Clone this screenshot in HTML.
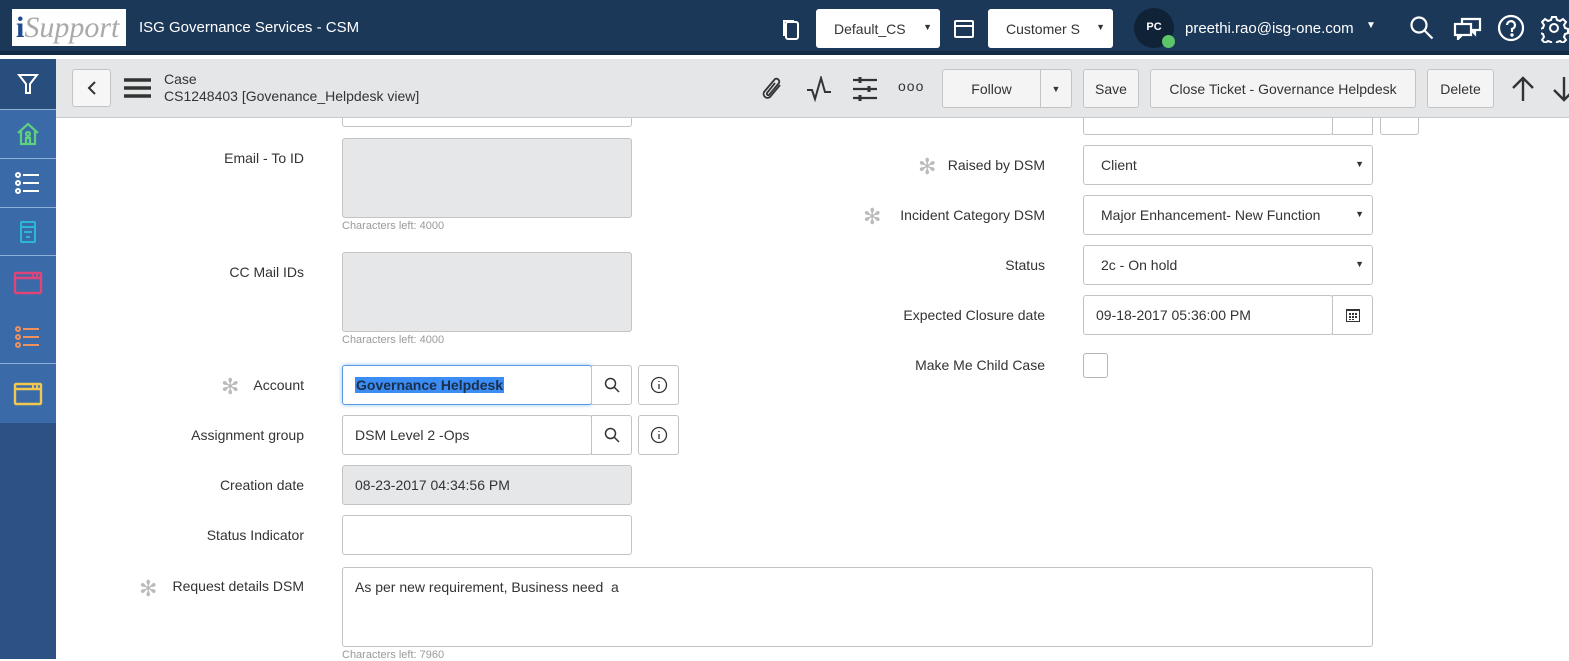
<!DOCTYPE html>
<html><head><meta charset="utf-8"><style>
*{box-sizing:border-box;margin:0;padding:0}
body{width:1569px;height:659px;overflow:hidden;background:#fff;font-family:"Liberation Sans",sans-serif;color:#333;position:relative;font-size:14px}
.a{position:absolute}
.top{left:0;top:0;width:1569px;height:55px;background:#1c3858;border-bottom:4px solid #132a44}
.side{left:0;top:59px;width:56px;height:600px;background:#2b5283}
.hb{left:56px;top:59px;width:1513px;height:59px;background:#e5e6e8;border-bottom:1px solid #c8c8c8}
.btn{position:absolute;background:#f4f4f4;border:1px solid #c4c4c4;border-radius:3px;font-size:14px;color:#333;display:flex;align-items:center;justify-content:center}
.lbl{position:absolute;font-size:14px;color:#333;text-align:right;white-space:nowrap}
.inp{position:absolute;border:1px solid #c3c3c3;border-radius:3px;background:#fff;font-size:14px;color:#333;padding-left:12px;display:flex;align-items:center}
.gray{background:#e6e7e9}
.cl{position:absolute;font-size:11px;color:#9a9a9a}
.ast{position:absolute;color:#bbb;font-size:22px;line-height:1}
.sel:after{content:"\25BC";position:absolute;right:8px;top:13px;font-size:9px;color:#333}
.sb{position:absolute;width:41px;border:1px solid #c3c3c3;background:#fff;display:flex;align-items:center;justify-content:center}
.sitem{position:absolute;left:0;width:56px;background:#3a6aa8;border-bottom:1px solid #8fb0da;display:flex;align-items:center;justify-content:center}
</style></head><body>
<div class="a top"></div>
<div class="a" style="left:12px;top:9px;width:114px;height:37px;background:#fff;font-family:'Liberation Serif',serif;font-style:italic;font-size:30px;color:#aaa;line-height:37px;padding-left:4px"><span style="color:#1d4b8f;font-style:normal;font-weight:bold">i</span>Support</div>
<div class="a" style="left:139px;top:19px;color:#fff;font-size:15px">ISG Governance Services - CSM</div>
<svg class="a" style="left:781px;top:18px" width="20" height="24" viewBox="0 0 20 24" fill="none" stroke="#fff" stroke-width="2"><rect x="5" y="4" width="12" height="17" rx="2"/><path d="M3 18V3h10"/></svg>
<div class="a inp sel" style="left:816px;top:9px;width:124px;height:39px;border:none;padding-left:18px">Default_CS</div>
<svg class="a" style="left:953px;top:19px" width="22" height="20" viewBox="0 0 22 20" fill="none" stroke="#fff" stroke-width="2"><rect x="2" y="2" width="18" height="16" rx="1"/><path d="M2 7h18"/></svg>
<div class="a inp sel" style="left:988px;top:9px;width:125px;height:39px;border:none;padding-left:18px">Customer S</div>
<div class="a" style="left:1134px;top:8px;width:40px;height:40px;border-radius:50%;background:#0f2236;color:#fff;font-size:11px;font-weight:bold;text-align:center;line-height:38px">PC</div>
<div class="a" style="left:1162px;top:35px;width:13px;height:13px;border-radius:50%;background:#5ec46a"></div>
<div class="a" style="left:1185px;top:20px;color:#fff;font-size:15px">preethi.rao@isg-one.com</div>
<div class="a" style="left:1366px;top:20px;color:#fff;font-size:10px">▼</div>
<svg class="a" style="left:1409px;top:15px" width="26" height="26" viewBox="0 0 26 26" fill="none" stroke="#fff" stroke-width="2.2"><circle cx="10" cy="10" r="7.5"/><path d="M15.5 15.5l8 8"/></svg>
<svg class="a" style="left:1453px;top:16px" width="30" height="24" viewBox="0 0 30 24" fill="none" stroke="#fff" stroke-width="2.2"><rect x="2" y="8" width="16" height="11"/><path d="M5 19v4l4-4"/><path d="M9 8V3h18v11h-9M22 14v4l-4-4"/></svg>
<svg class="a" style="left:1497px;top:14px" width="28" height="28" viewBox="0 0 28 28" fill="none" stroke="#fff" stroke-width="2.2"><circle cx="14" cy="14" r="12"/><path d="M10 11a4 4 0 1 1 5 4v3"/><circle cx="15" cy="21" r="0.6" fill="#fff"/></svg>
<svg class="a" style="left:1541px;top:15px" width="28" height="28" viewBox="0 0 28 28" fill="none" stroke="#fff" stroke-width="2"><circle cx="13" cy="13" r="4"/><path d="M11 2h4l1 3 3 1 3-2 3 3-2 3 1 3 3 1v4l-3 1-1 3 2 3-3 3-3-2-3 1-1 3h-4l-1-3-3-1-3 2-3-3 2-3-1-3-3-1v-4l3-1 1-3-2-3 3-3 3 2 3-1z"/></svg>

<div class="a side"></div>
<div class="a" style="left:0;top:59px;width:56px;height:51px;background:#284e7e;border-bottom:1px solid #8fb0da;display:flex;align-items:center;justify-content:center">
<svg width="22" height="24" viewBox="0 0 22 24" fill="none" stroke="#fff" stroke-width="2"><path d="M2 3h18l-7 9v9h-4v-9z"/></svg></div>
<div class="sitem" style="top:110px;height:49px"><svg width="26" height="26" viewBox="0 0 26 26" fill="none" stroke="#5fd07d" stroke-width="2.2"><path d="M3 12L13 3l10 9M6 10v13h14V10"/><circle cx="13" cy="13" r="2"/><path d="M11 23v-6h4v6"/></svg></div>
<div class="sitem" style="top:159px;height:49px"><svg width="26" height="22" viewBox="0 0 26 22" fill="none" stroke="#fff" stroke-width="2"><circle cx="3" cy="3" r="2"/><circle cx="3" cy="11" r="2"/><circle cx="3" cy="19" r="2"/><path d="M8 3h16M8 11h16M8 19h16"/></svg></div>
<div class="sitem" style="top:208px;height:48px"><svg width="18" height="24" viewBox="0 0 18 24" fill="none" stroke="#2bb8d6" stroke-width="2"><rect x="2" y="2" width="14" height="20" rx="1"/><path d="M2 7h14M5 12h8M7 17h4"/></svg></div>
<div class="sitem" style="top:256px;height:54px;border-bottom:none"><svg width="30" height="24" viewBox="0 0 30 24" fill="none" stroke="#e0457a" stroke-width="2.4"><rect x="2" y="2" width="26" height="20" rx="1"/><path d="M2 7h26M19 4.5h2M23 4.5h2"/></svg></div>
<div class="sitem" style="top:310px;height:54px"><svg width="26" height="22" viewBox="0 0 26 22" fill="none" stroke="#f0905a" stroke-width="2"><circle cx="3" cy="3" r="2"/><circle cx="3" cy="11" r="2"/><circle cx="3" cy="19" r="2"/><path d="M8 3h16M8 11h16M8 19h16"/></svg></div>
<div class="sitem" style="top:364px;height:59px;border-bottom:none"><svg width="30" height="24" viewBox="0 0 30 24" fill="none" stroke="#f0c850" stroke-width="2.4"><rect x="2" y="2" width="26" height="20" rx="1"/><path d="M2 7h26M19 4.5h2M23 4.5h2"/></svg></div>

<div class="a hb"></div>
<div class="btn" style="left:72px;top:69px;width:39px;height:38px;background:#f6f6f6"><svg width="10" height="16" viewBox="0 0 10 16" fill="none" stroke="#333" stroke-width="2"><path d="M8 2L2 8l6 6"/></svg></div>
<svg class="a" style="left:124px;top:78px" width="27" height="20" viewBox="0 0 27 20" stroke="#333" stroke-width="3.4"><path d="M0 2h27M0 10h27M0 18h27"/></svg>
<div class="a" style="left:164px;top:71px;font-size:14px;color:#333">Case</div>
<div class="a" style="left:164px;top:88px;font-size:14px;color:#333">CS1248403 [Govenance_Helpdesk view]</div>
<svg class="a" style="left:760px;top:75px" width="26" height="28" viewBox="0 0 26 28" fill="none" stroke="#333" stroke-width="1.8"><path d="M20 10L10 22a4 4 0 0 1-6-5L15 4a3 3 0 0 1 4 4L9 20a1.5 1.5 0 0 1-2-2l8-10"/></svg>
<svg class="a" style="left:806px;top:76px" width="26" height="26" viewBox="0 0 26 26" fill="none" stroke="#333" stroke-width="2"><path d="M1 14h5l3 9 6-21 4 14h6"/></svg>
<svg class="a" style="left:852px;top:76px" width="26" height="26" viewBox="0 0 26 26" fill="none" stroke="#333" stroke-width="2.2"><path d="M1 4h24M1 13h24M1 22h24"/><path d="M8 1v6M17 10v6M8 19v6" stroke-width="3"/></svg>
<div class="a" style="left:898px;top:78px;font-size:14px;color:#333;letter-spacing:1px">ooo</div>
<div class="btn" style="left:942px;top:69px;width:99px;height:39px;border-radius:3px 0 0 3px">Follow</div>
<div class="btn" style="left:1040px;top:69px;width:32px;height:39px;border-radius:0 3px 3px 0;font-size:9px">▼</div>
<div class="btn" style="left:1083px;top:69px;width:56px;height:39px">Save</div>
<div class="btn" style="left:1150px;top:69px;width:266px;height:39px">Close Ticket - Governance Helpdesk</div>
<div class="btn" style="left:1427px;top:69px;width:67px;height:39px">Delete</div>
<svg class="a" style="left:1511px;top:76px" width="24" height="26" viewBox="0 0 24 26" fill="none" stroke="#333" stroke-width="2.4"><path d="M12 25V2M2 12L12 2l10 10"/></svg>
<svg class="a" style="left:1552px;top:76px" width="24" height="26" viewBox="0 0 24 26" fill="none" stroke="#333" stroke-width="2.4"><path d="M12 1v23M2 14l10 10 10-10"/></svg>

<!-- left column -->
<div class="inp" style="left:342px;top:100px;width:290px;height:27px;z-index:-1"></div>
<div class="lbl" style="right:1265px;top:150px">Email - To ID</div>
<div class="inp gray" style="left:342px;top:138px;width:290px;height:80px"></div>
<div class="cl" style="left:342px;top:220px">Characters left: 4000</div>
<div class="lbl" style="right:1265px;top:264px">CC Mail IDs</div>
<div class="inp gray" style="left:342px;top:252px;width:290px;height:80px"></div>
<div class="cl" style="left:342px;top:334px">Characters left: 4000</div>

<div class="ast" style="left:221px;top:376px">✻</div>
<div class="lbl" style="right:1265px;top:377px">Account</div>
<div class="inp" style="left:342px;top:365px;width:250px;height:40px;border-color:#5b9be6;box-shadow:0 0 4px #8fbff2"><span style="background:#3b8cf3;color:#1a2f4a;font-weight:bold;padding:0 1px">Governance Helpdesk</span></div>
<div class="sb" style="left:591px;top:365px;height:40px;border-radius:0 3px 3px 0"><svg width="16" height="16" viewBox="0 0 16 16" fill="none" stroke="#333" stroke-width="1.5"><circle cx="6.5" cy="6.5" r="5"/><path d="M10 10l5 5"/></svg></div>
<div class="sb" style="left:638px;top:365px;height:40px;border-radius:3px"><svg width="18" height="18" viewBox="0 0 18 18" fill="none" stroke="#333" stroke-width="1.3"><circle cx="9" cy="9" r="7.5"/><path d="M9 8v5M9 5v1"/></svg></div>

<div class="lbl" style="right:1265px;top:427px">Assignment group</div>
<div class="inp" style="left:342px;top:415px;width:250px;height:40px">DSM Level 2 -Ops</div>
<div class="sb" style="left:591px;top:415px;height:40px;border-radius:0 3px 3px 0"><svg width="16" height="16" viewBox="0 0 16 16" fill="none" stroke="#333" stroke-width="1.5"><circle cx="6.5" cy="6.5" r="5"/><path d="M10 10l5 5"/></svg></div>
<div class="sb" style="left:638px;top:415px;height:40px;border-radius:3px"><svg width="18" height="18" viewBox="0 0 18 18" fill="none" stroke="#333" stroke-width="1.3"><circle cx="9" cy="9" r="7.5"/><path d="M9 8v5M9 5v1"/></svg></div>

<div class="lbl" style="right:1265px;top:477px">Creation date</div>
<div class="inp gray" style="left:342px;top:465px;width:290px;height:40px">08-23-2017 04:34:56 PM</div>
<div class="lbl" style="right:1265px;top:527px">Status Indicator</div>
<div class="inp" style="left:342px;top:515px;width:290px;height:40px"></div>

<div class="ast" style="left:139px;top:578px">✻</div>
<div class="lbl" style="right:1265px;top:578px">Request details DSM</div>
<div class="inp" style="left:342px;top:567px;width:1031px;height:80px;align-items:flex-start;padding-top:11px">As per new requirement, Business need&nbsp; a</div>
<div class="cl" style="left:342px;top:649px">Characters left: 7960</div>

<!-- right column -->
<div class="inp" style="left:1083px;top:100px;width:250px;height:35px;z-index:-1"></div>
<div class="sb" style="left:1332px;top:100px;height:35px;z-index:-1"></div>
<div class="sb" style="left:1380px;top:100px;height:35px;width:39px;border-radius:3px;z-index:-1"></div>
<div class="ast" style="left:918px;top:156px">✻</div>
<div class="lbl" style="right:524px;top:157px">Raised by DSM</div>
<div class="inp sel" style="left:1083px;top:145px;width:290px;height:40px;padding-left:17px">Client</div>
<div class="ast" style="left:863px;top:206px">✻</div>
<div class="lbl" style="right:524px;top:207px">Incident Category DSM</div>
<div class="inp sel" style="left:1083px;top:195px;width:290px;height:40px;padding-left:17px">Major Enhancement- New Function</div>
<div class="lbl" style="right:524px;top:257px">Status</div>
<div class="inp sel" style="left:1083px;top:245px;width:290px;height:40px;padding-left:17px">2c - On hold</div>
<div class="lbl" style="right:524px;top:307px">Expected Closure date</div>
<div class="inp" style="left:1083px;top:295px;width:250px;height:40px">09-18-2017 05:36:00 PM</div>
<div class="sb" style="left:1332px;top:295px;height:40px;border-radius:0 3px 3px 0"><svg width="14" height="13" viewBox="0 0 14 13" fill="#333"><rect x="0" y="0" width="14" height="2"/><rect x="0" y="0" width="1" height="13"/><rect x="13" y="0" width="1" height="13"/><rect x="0" y="12" width="14" height="1"/><g><rect x="3" y="4" width="2" height="2"/><rect x="6" y="4" width="2" height="2"/><rect x="9" y="4" width="2" height="2"/><rect x="3" y="7" width="2" height="2"/><rect x="6" y="7" width="2" height="2"/><rect x="9" y="7" width="2" height="2"/><rect x="3" y="10" width="2" height="1"/><rect x="6" y="10" width="2" height="1"/></g></svg></div>
<div class="lbl" style="right:524px;top:357px">Make Me Child Case</div>
<div class="a" style="left:1083px;top:353px;width:25px;height:25px;border:1px solid #b5b5b5;border-radius:3px"></div>
</body></html>
